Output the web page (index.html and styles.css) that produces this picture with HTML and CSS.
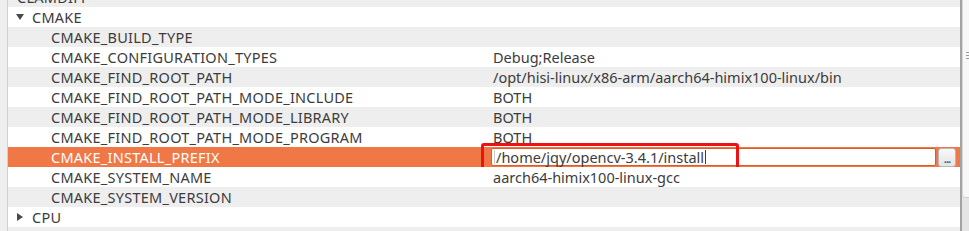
FILE: index.html
```html
<!DOCTYPE html>
<html lang="en">
<head>
    <meta charset="UTF-8">
    <title>CMake cache</title>
    <link rel="stylesheet" href="styles.css">
</head>
<body>
    <div class="win">
        <div class="gutter"></div>

        <div class="tree">
            <div class="row even"><span class="name top">CLAMDIFF</span></div>
            <div class="row"><span class="name top"><i class="arr down"></i>CMAKE</span></div>
            <div class="row even"><span class="name">CMAKE_BUILD_TYPE</span><span class="val"></span></div>
            <div class="row"><span class="name">CMAKE_CONFIGURATION_TYPES</span><span class="val">Debug;Release</span></div>
            <div class="row even"><span class="name">CMAKE_FIND_ROOT_PATH</span><span class="val">/opt/hisi-linux/x86-arm/aarch64-himix100-linux/bin</span></div>
            <div class="row"><span class="name">CMAKE_FIND_ROOT_PATH_MODE_INCLUDE</span><span class="val">BOTH</span></div>
            <div class="row even"><span class="name">CMAKE_FIND_ROOT_PATH_MODE_LIBRARY</span><span class="val">BOTH</span></div>
            <div class="row"><span class="name">CMAKE_FIND_ROOT_PATH_MODE_PROGRAM</span><span class="val">BOTH</span></div>
            <!-- 편집중인 행 -->
            <div class="row sel">
                <span class="name">CMAKE_INSTALL_PREFIX</span>
                <span class="edit">
                    <span class="inp"><span class="caret"></span>/home/jqy/opencv-3.4.1/install<span class="caret end"></span></span>
                    <span class="btn">...</span>
                </span>
                <span class="mark"></span>
            </div>
            <div class="row"><span class="name">CMAKE_SYSTEM_NAME</span><span class="val">aarch64-himix100-linux-gcc</span></div>
            <div class="row even"><span class="name">CMAKE_SYSTEM_VERSION</span><span class="val"></span></div>
            <div class="row"><span class="name top"><i class="arr right"></i>CPU</span></div>
            <div class="row even"></div>
        </div>

        <div class="sbar">
            <div class="thumb"><span class="grip"></span></div>
        </div>
    </div>
</body>
</html>
```

FILE: styles.css
```css
/* 초기화 */
html, body{
    margin: 0;
    padding: 0;
}
body{
    width: 969px;
    height: 231px;
    overflow: hidden;
    background: #fff;
    font-family: "Noto Sans", "DejaVu Sans", sans-serif;
    font-size: 14.5px;
    color: #3c3c3c;
}

.win{
    display: flex;
    height: 231px;
    overflow: hidden;
}

/* 왼쪽 여백 */
.gutter{
    width: 7px;
    background: #efefef;
    border-right: 1px solid #cfcfcf;
}

/* 트리 */
.tree{
    flex: 1;
    margin-top: -13px;
}
.row{
    position: relative;
    display: flex;
    align-items: center;
    height: 20px;
    background: #fff;
    white-space: nowrap;
}
.row.even{
    background: #eeeeee;
}
.name{
    width: 442px;
    padding-left: 43px;
    flex: none;
    letter-spacing: 0.25px;
}
.name.top{
    padding-left: 9px;
    display: flex;
    align-items: center;
}

/* 화살표 */
.arr{
    display: inline-block;
    width: 0;
    height: 0;
    margin-right: 8px;
}
.arr.down{
    border-left: 4px solid transparent;
    border-right: 4px solid transparent;
    border-top: 6px solid #4a4a4a;
    margin-left: -1px;
}
.arr.right{
    border-top: 4px solid transparent;
    border-bottom: 4px solid transparent;
    border-left: 6px solid #4a4a4a;
    margin-right: 9px;
}

/* 선택된 행 */
.row.sel{
    background: #f07746;
    color: #fff;
}
.edit{
    display: flex;
    align-items: center;
    gap: 2px;
    margin-left: -2px;
}
.inp{
    display: flex;
    align-items: center;
    width: 441px;
    height: 16px;
    padding-left: 2px;
    background: #fff;
    border: 1px solid #e05a22;
    border-radius: 2px;
    color: #3c3c3c;
}
.caret{
    width: 1px;
    height: 14px;
    background: #c8c8c8;
    margin-right: 1px;
}
.caret.end{
    background: #3c3c3c;
    margin-left: 1px;
}
.btn{
    width: 16px;
    height: 17px;
    background: linear-gradient(#f8f8f8, #e4e4e4);
    border: 1px solid #b8b8b8;
    border-radius: 3px;
    color: #3a5a9a;
    font-size: 11px;
    font-weight: bold;
    line-height: 20px;
    text-align: center;
    letter-spacing: -1px;
}

/* 빨간 표시 박스 (주석) */
.mark{
    position: absolute;
    left: 473px;
    top: -4px;
    width: 252px;
    height: 22px;
    border: 3px solid #ee1111;
    border-radius: 3px;
}

/* 스크롤바 */
.sbar{
    width: 7px;
    border-left: 2px solid #a3a3a3;
    background: #e4e4e4;
}
.thumb{
    position: relative;
    height: 197px;
    background: #f7f7f7;
    border-bottom-left-radius: 4px;
    border-bottom: 1px solid #d0d0d0;
    border-left: 1px solid #d8d8d8;
}
.grip{
    position: absolute;
    left: 3px;
    top: 52px;
    width: 4px;
    height: 7px;
    background: repeating-linear-gradient(#9a9a9a 0 1px, transparent 1px 3px);
}
```
